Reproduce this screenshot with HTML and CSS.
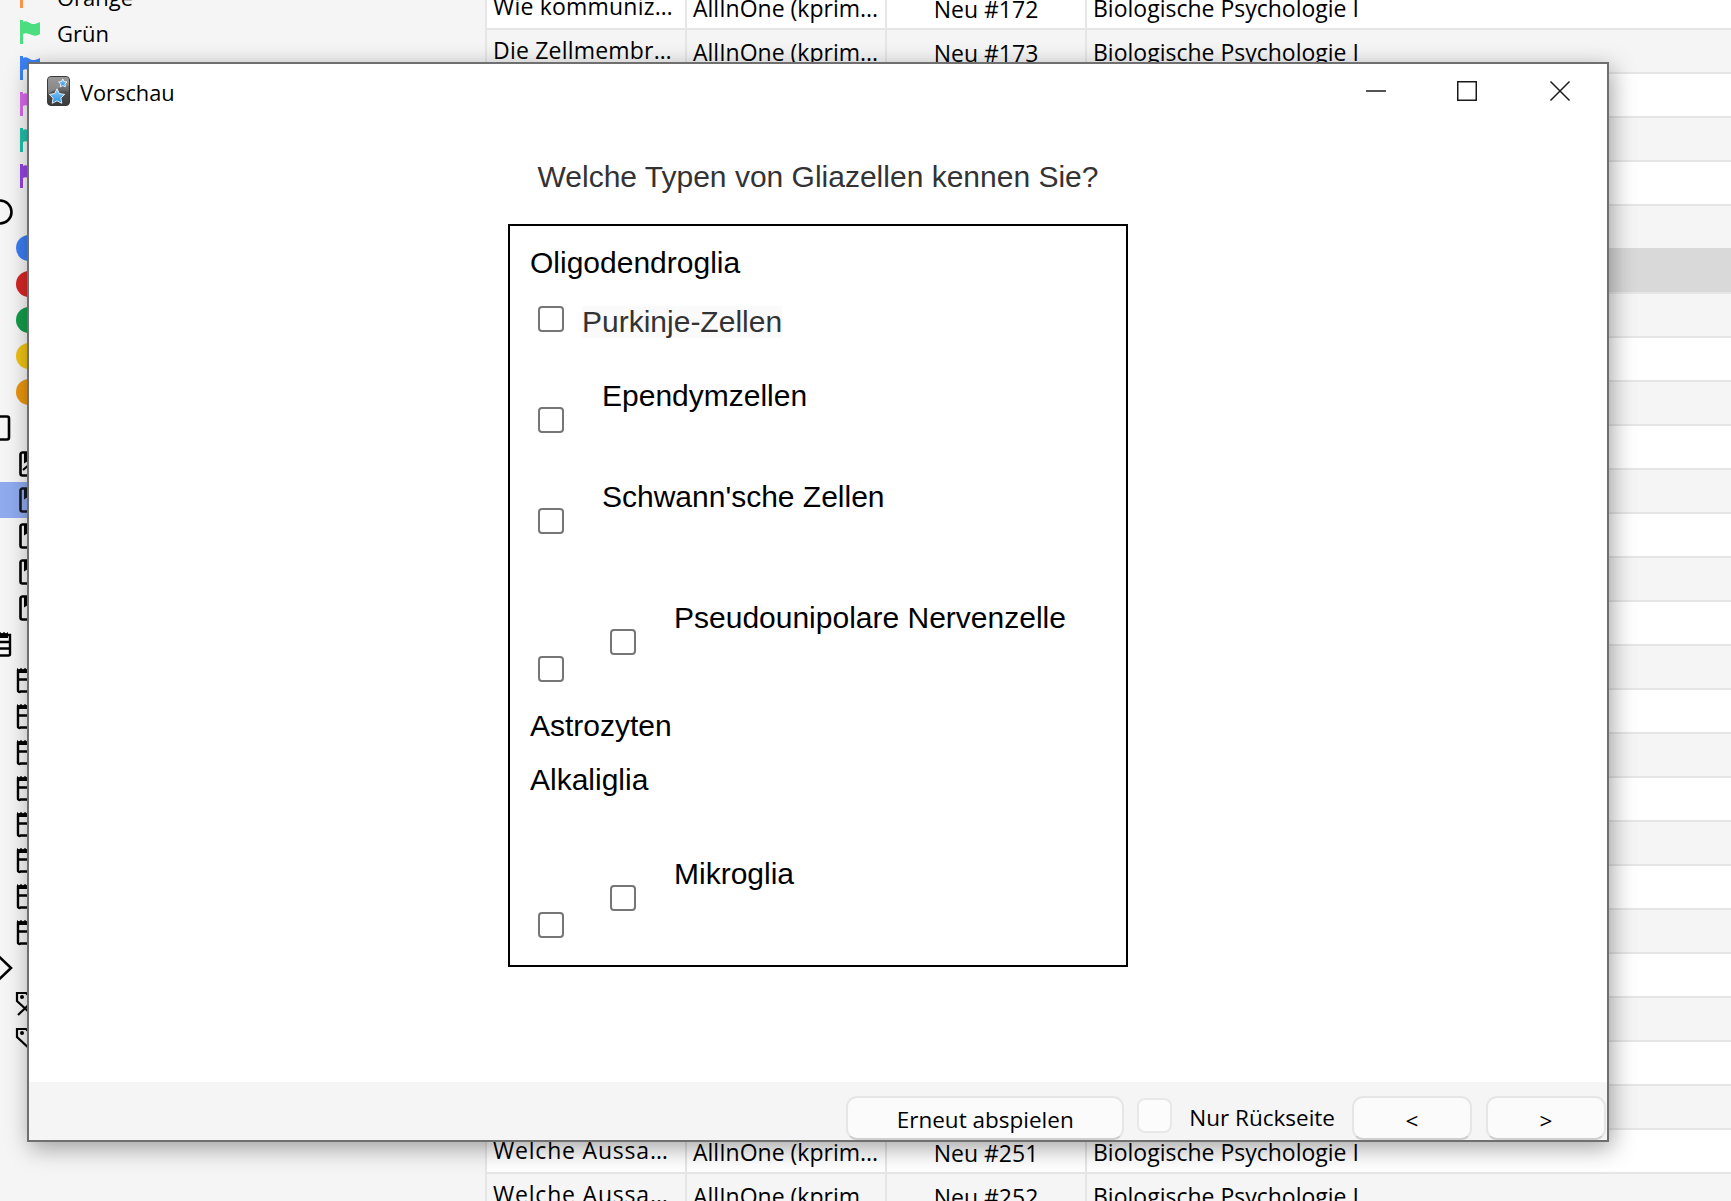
FILE: index.html
```html
<!DOCTYPE html>
<html lang="de">
<head>
<meta charset="utf-8">
<title>Vorschau</title>
<link rel="stylesheet" href="styles.css">
</head>
<body>
<div class="app">
  <aside class="sidebar">
    <ul class="tree">
      <li class="item child"><svg class="ico flag f-orange" viewBox="0 0 20 24"><use href="#flag"/></svg><span class="label">Orange</span></li>
      <li class="item child"><svg class="ico flag f-green" viewBox="0 0 20 24"><use href="#flag"/></svg><span class="label">Grün</span></li>
      <li class="item child"><svg class="ico flag f-blue" viewBox="0 0 20 24"><use href="#flag"/></svg><span class="label">Blau</span></li>
      <li class="item child"><svg class="ico flag f-pink" viewBox="0 0 20 24"><use href="#flag"/></svg></li>
      <li class="item child"><svg class="ico flag f-teal" viewBox="0 0 20 24"><use href="#flag"/></svg></li>
      <li class="item child"><svg class="ico flag f-purple" viewBox="0 0 20 24"><use href="#flag"/></svg></li>

      <li class="item"><svg class="ico" viewBox="0 0 26 26"><circle class="line" cx="13" cy="13" r="11.5"/></svg></li>
      <li class="item child dot-row"><span class="dot d-blue"></span></li>
      <li class="item child dot-row"><span class="dot d-red"></span></li>
      <li class="item child dot-row"><span class="dot d-green"></span></li>
      <li class="item child dot-row"><span class="dot d-yellow"></span></li>
      <li class="item child dot-row"><span class="dot d-orange"></span></li>

      <li class="item"><svg class="ico" viewBox="0 0 26 26"><rect class="line" x="1.5" y="1.5" width="20.5" height="23" rx="2"/></svg></li>
      <li class="item child note"><svg class="ico" viewBox="0 0 26 26"><use href="#note"/><path class="white-cut" d="M4 19l8-7"/></svg></li>
      <li class="item child note selected"><svg class="ico" viewBox="0 0 26 26"><use href="#note"/></svg></li>
      <li class="item child note"><svg class="ico" viewBox="0 0 26 26"><use href="#note"/></svg></li>
      <li class="item child note"><svg class="ico" viewBox="0 0 26 26"><use href="#note"/></svg></li>
      <li class="item child note"><svg class="ico" viewBox="0 0 26 26"><use href="#note"/></svg></li>

      <li class="item"><svg class="ico" viewBox="0 0 26 26"><use href="#cal-list"/></svg></li>
      <li class="item child deck"><svg class="ico" viewBox="0 0 26 26"><use href="#cal"/></svg></li>
      <li class="item child deck"><svg class="ico" viewBox="0 0 26 26"><use href="#cal"/></svg></li>
      <li class="item child deck"><svg class="ico" viewBox="0 0 26 26"><use href="#cal"/></svg></li>
      <li class="item child deck"><svg class="ico" viewBox="0 0 26 26"><use href="#cal"/></svg></li>
      <li class="item child deck"><svg class="ico" viewBox="0 0 26 26"><use href="#cal"/></svg></li>
      <li class="item child deck"><svg class="ico" viewBox="0 0 26 26"><use href="#cal"/></svg></li>
      <li class="item child deck"><svg class="ico" viewBox="0 0 26 26"><use href="#cal"/></svg></li>
      <li class="item child deck"><svg class="ico" viewBox="0 0 26 26"><use href="#cal"/></svg></li>

      <li class="item"><svg class="ico" viewBox="0 0 26 26"><path class="line" d="M12 1.500L24 13 12 24.500"/></svg></li>
      <li class="item child deck"><svg class="ico" viewBox="0 0 26 26"><path class="thin" d="M1 2h9l12 12-8 8L1 10zM2 24L24 3"/><circle class="ink" cx="6" cy="6" r="2"/></svg></li>
      <li class="item child deck"><svg class="ico" viewBox="0 0 26 26"><path class="thin" d="M1 2h9l14 14-8 8L1 10z"/><circle class="ink" cx="6" cy="6" r="2"/></svg></li>
    </ul>
  </aside>

  <main class="table">
    <div class="row"><div class="cell c1">Wie kommuniz…</div><div class="cell c2">AllInOne (kprim...</div><div class="cell c3">Neu #172</div><div class="cell c4">Biologische Psychologie I</div></div>
    <div class="row alt"><div class="cell c1">Die Zellmembr…</div><div class="cell c2">AllInOne (kprim...</div><div class="cell c3">Neu #173</div><div class="cell c4">Biologische Psychologie I</div></div>
    <div class="row"></div>
    <div class="row alt"></div>
    <div class="row"></div>
    <div class="row alt"></div>
    <div class="row current"></div>
    <div class="row alt"></div>
    <div class="row"></div>
    <div class="row alt"></div>
    <div class="row"></div>
    <div class="row alt"></div>
    <div class="row"></div>
    <div class="row alt"></div>
    <div class="row"></div>
    <div class="row alt"></div>
    <div class="row"></div>
    <div class="row alt"></div>
    <div class="row"></div>
    <div class="row alt"></div>
    <div class="row"></div>
    <div class="row alt"></div>
    <div class="row"></div>
    <div class="row alt"></div>
    <div class="row"></div>
    <div class="row alt"></div>
    <div class="row"><div class="cell c1 wide">Welche Aussa…</div><div class="cell c2">AllInOne (kprim...</div><div class="cell c3">Neu #251</div><div class="cell c4">Biologische Psychologie I</div></div>
    <div class="row alt"><div class="cell c1 wide">Welche Aussa…</div><div class="cell c2">AllInOne (kprim...</div><div class="cell c3">Neu #252</div><div class="cell c4">Biologische Psychologie I</div></div>
  </main>
</div>

<section class="window">
  <header class="titlebar">
    <svg class="app-icon" viewBox="0 0 23 30">
      <defs>
        <linearGradient id="tile" x1="0" y1="0" x2="0" y2="1">
          <stop offset="0" stop-color="#8a8a8a"/>
          <stop offset="0.45" stop-color="#6a6a6a"/>
          <stop offset="0.55" stop-color="#4e4e4e"/>
          <stop offset="1" stop-color="#3a3a3a"/>
        </linearGradient>
        <linearGradient id="star" x1="0" y1="0" x2="0" y2="1">
          <stop offset="0" stop-color="#8ccbf6"/>
          <stop offset="1" stop-color="#2a8fe4"/>
        </linearGradient>
      </defs>
      <rect x="0.5" y="0.5" width="22" height="29" rx="3.5" fill="url(#tile)" stroke="#3a3a3a"/>
      <path d="M1 18C8 13 15 10 22 9.500V4a3 3 0 0 0-3-3H4A3 3 0 0 0 1 4z" fill="#a8a8a8" opacity=".5"/>
      <path class="star" d="M10 12.800l2.400 4.800 5.300.8-3.800 3.700.9 5.200L10 24.800l-4.800 2.500.9-5.200-3.800-3.700 5.300-.8z"/>
      <path class="star" d="M15.800 3l1.300 2.600 2.900.4-2.100 2 .5 2.900-2.600-1.400-2.600 1.400.5-2.900-2.100-2 2.900-.4z"/>
    </svg>
    <span class="win-title">Vorschau</span>
    <div class="controls">
      <svg class="ctl" viewBox="0 0 20 20"><path d="M0 10h20"/></svg>
      <svg class="ctl ctl-max" viewBox="0 0 20 20"><rect x=".75" y=".75" width="18.500" height="18.500"/></svg>
      <svg class="ctl ctl-close" viewBox="0 0 20 20"><path d="M.5.5l19 19M19.500.5l-19 19"/></svg>
    </div>
  </header>

  <div class="content">
    <p class="question">Welche Typen von Gliazellen kennen Sie?</p>
    <div class="card">
      <div class="plain first">Oligodendroglia</div>
      <div class="opt purkinje"><span class="cb"></span><span class="hl">Purkinje-Zellen</span></div>
      <div class="opt ependym"><span class="cb low"></span><span class="txt">Ependymzellen</span></div>
      <div class="opt schwann"><span class="cb low"></span><span class="txt">Schwann'sche Zellen</span></div>
      <div class="opt pseudo"><span class="cb lower"></span><div class="opt inner"><span class="cb low"></span><span class="txt">Pseudounipolare Nervenzelle</span></div></div>
      <div class="plain astro">Astrozyten</div>
      <div class="plain alkali">Alkaliglia</div>
      <div class="opt mikro"><span class="cb lower"></span><div class="opt inner"><span class="cb low"></span><span class="txt">Mikroglia</span></div></div>
    </div>
  </div>

  <footer class="footer">
    <button class="btn replay">Erneut abspielen</button>
    <span class="back-check"></span>
    <span class="back-label">Nur Rückseite</span>
    <button class="btn nav">&lt;</button>
    <button class="btn nav">&gt;</button>
  </footer>
</section>

<svg class="defs" width="0" height="0">
  <defs>
    <path id="flag" d="M0 0h3v24H0zM3 2c3-2 6 1 9 2 3 .5 6-1 8-2v12c-3 2-5 2-8 1-3-1-6-3-9-1z"/>
    <g id="note"><path d="M3.500 1.500h19a2 2 0 0 1 2 2v19a2 2 0 0 1-2 2h-19a2 2 0 0 1-2-2v-19a2 2 0 0 1 2-2z" fill="none" stroke="#000" stroke-width="2.600"/><path d="M5 1.500h11v11l-5.500-3.500L5 12.500z" fill="#000"/></g>
    <g id="cal"><path d="M1 1l2 1.500 2-1.500 2 1.500 2-1.500 2 1.500 2-1.500 2 1.500 2-1.500v5H1z" fill="#000"/><path d="M3 4h20v19a1.500 1.500 0 0 1-1.500 1.500h-17A1.500 1.500 0 0 1 2 23V4zM2 12.500h21" fill="none" stroke="#000" stroke-width="2.400"/></g>
    <g id="cal-list"><path d="M1 1l2 1.500 2-1.500 2 1.500 2-1.500 2 1.500 2-1.500 2 1.500 2-1.500 2 1.500 2-1.500v6H1z" fill="#000"/><path d="M2 4h21v19a1.500 1.500 0 0 1-1.500 1.500h-18A1.500 1.500 0 0 1 2 23zM2 11h21M2 17.500h21" fill="none" stroke="#000" stroke-width="2.400"/></g>
  </defs>
</svg>
</body>
</html>
```

FILE: styles.css
```css
* { box-sizing: border-box; }
html, body { margin: 0; padding: 0; }
body {
  width: 1731px;
  height: 1201px;
  overflow: hidden;
  position: relative;
  background: #f5f5f5;
  font-family: "Open Sans", "Noto Sans", sans-serif;
  color: #000;
}

.app { display: flex; height: 1201px; overflow: hidden; }

/* sidebar */
.sidebar { width: 485px; flex: none; background: #f5f5f5; overflow: hidden; }
.tree { list-style: none; margin: -22px 0 0 -13px; padding: 0; }
.item {
  height: 36px;
  display: flex;
  align-items: center;
  padding-left: 0;
  font-size: 22px;
}
.label { padding-top: 2px; }
.child { padding-left: 33px; }
.note { padding-left: 32px; }
.deck { padding-left: 29px; }
.dot-row { padding-left: 29px; }
.selected { background: #8fabee; }
.selected .ico { opacity: .85; }
.ico { width: 26px; height: 26px; flex: none; overflow: visible; display: block; }
.flag { width: 20px; height: 24px; margin-right: 17px; }
.f-orange { fill: #f9944a; }
.f-green { fill: #4ade80; }
.f-blue { fill: #3b82f6; }
.f-pink { fill: #d968ee; }
.f-teal { fill: #1fbfa8; }
.f-purple { fill: #9244e0; }
.line { fill: none; stroke: #000; stroke-width: 2.6; }
.thin { fill: none; stroke: #000; stroke-width: 2.2; }
.ink { fill: #000; }
.white-cut { fill: none; stroke: #000; stroke-width: 2.2; }
.dot { width: 26px; height: 26px; border-radius: 50%; display: block; }
.d-blue { background: #3b7cf0; }
.d-red { background: #d42626; }
.d-green { background: #129c4a; }
.d-yellow { background: #eec211; }
.d-orange { background: #e9950d; }

/* table */
.table { flex: 1; margin-top: -16px; background: #fff; font-size: 23px; overflow: hidden; }
.row {
  height: 44px;
  display: flex;
  background: #fff;
  border-top: 2px solid #e6e6e6;
}
.alt { background: #f5f5f5; }
.current { background: #d9d9d9; border-top-color: #d9d9d9; }
.cell {
  flex: none;
  width: 200px;
  height: 44px;
  margin-top: -2px;
  padding: 0 6px;
  border-left: 2px solid #e6e6e6;
  display: flex;
  align-items: center;
  white-space: nowrap;
  line-height: 30px;
}
.c1 { letter-spacing: .2px; }
.wide { letter-spacing: .8px; }
.c2 { padding-top: 4px; }
.c3 { justify-content: center; padding-top: 6px; }
.c4 { width: 400px; padding-top: 4px; }

/* window */
.window {
  position: absolute;
  left: 27px;
  top: 62px;
  width: 1582px;
  height: 1080px;
  background: #fff;
  border: 2px solid #6f6f6f;
  box-shadow: 3px 6px 22px rgba(0, 0, 0, .36);
  display: flex;
  flex-direction: column;
}
.titlebar {
  height: 56px;
  flex: none;
  display: flex;
  align-items: center;
  padding-left: 18px;
}
.app-icon { width: 23px; height: 30px; flex: none; margin: 0 10px 2px 0; }
.star { fill: url(#star); stroke: #eef6fc; stroke-width: .9; }
.win-title { font-size: 21.8px; }
.controls { margin: 0 0 3px auto; display: flex; padding-right: 37px; }
.ctl { width: 20px; height: 20px; display: block; fill: none; stroke: #1a1a1a; stroke-width: 1.5; overflow: visible; }
.ctl-max { margin-left: 71px; }
.ctl-close { margin-left: 73px; }

.content {
  flex: 1;
  display: flex;
  flex-direction: column;
  align-items: center;
  font-family: "Liberation Sans", Arial, sans-serif;
  font-size: 30px;
  line-height: 34px;
}
.question { margin: 40px 0 30px; color: #333; }
.card {
  width: 620px;
  height: 743px;
  border: 2px solid #000;
  padding: 20px 20px 0;
}
.plain { height: 34px; }
.opt { display: flex; align-items: flex-start; }
.cb {
  width: 26px;
  height: 26px;
  flex: none;
  margin-left: 8px;
  border: 2px solid #767676;
  border-radius: 4px;
  background: #fff;
  display: block;
}
.low { margin-top: 28px; }
.lower { margin-top: 55px; }
.hl { margin-left: 18px; background: #fafafa; color: #333; height: 32px; line-height: 32px; }
.txt { margin-left: 38px; }
.inner { margin-left: 38px; }
.purkinje { margin-top: 26px; }
.ependym { margin-top: 41px; }
.schwann { margin-top: 47px; }
.pseudo { margin-top: 67px; }
.astro { margin-top: 27px; }
.alkali { margin-top: 20px; }
.mikro { margin-top: 60px; }

.footer {
  height: 58px;
  flex: none;
  background: #f5f5f5;
  display: flex;
  align-items: flex-end;
  padding-right: 1px;
  justify-content: flex-end;
  font-size: 22.5px;
}
.btn {
  height: 44px;
  border: 2px solid #e6e6e6;
  border-bottom-color: #cfcfcf;
  border-radius: 11px;
  background: #fbfbfb;
  font: inherit;
  color: #000;
  padding: 0;
  text-align: center;
}
.replay { width: 278px; padding-top: 2px; }
.nav { width: 120px; margin-left: 14px; padding-top: 4px; }
.back-check {
  width: 35px;
  height: 35px;
  margin: 0 0 7px 13px;
  background: #fcfcfc;
  border: 2px solid #e8e8e8;
  border-radius: 8px;
}
.back-label { margin: 0 3px 5px 17px; line-height: 34px; }
.defs { position: absolute; }
```
